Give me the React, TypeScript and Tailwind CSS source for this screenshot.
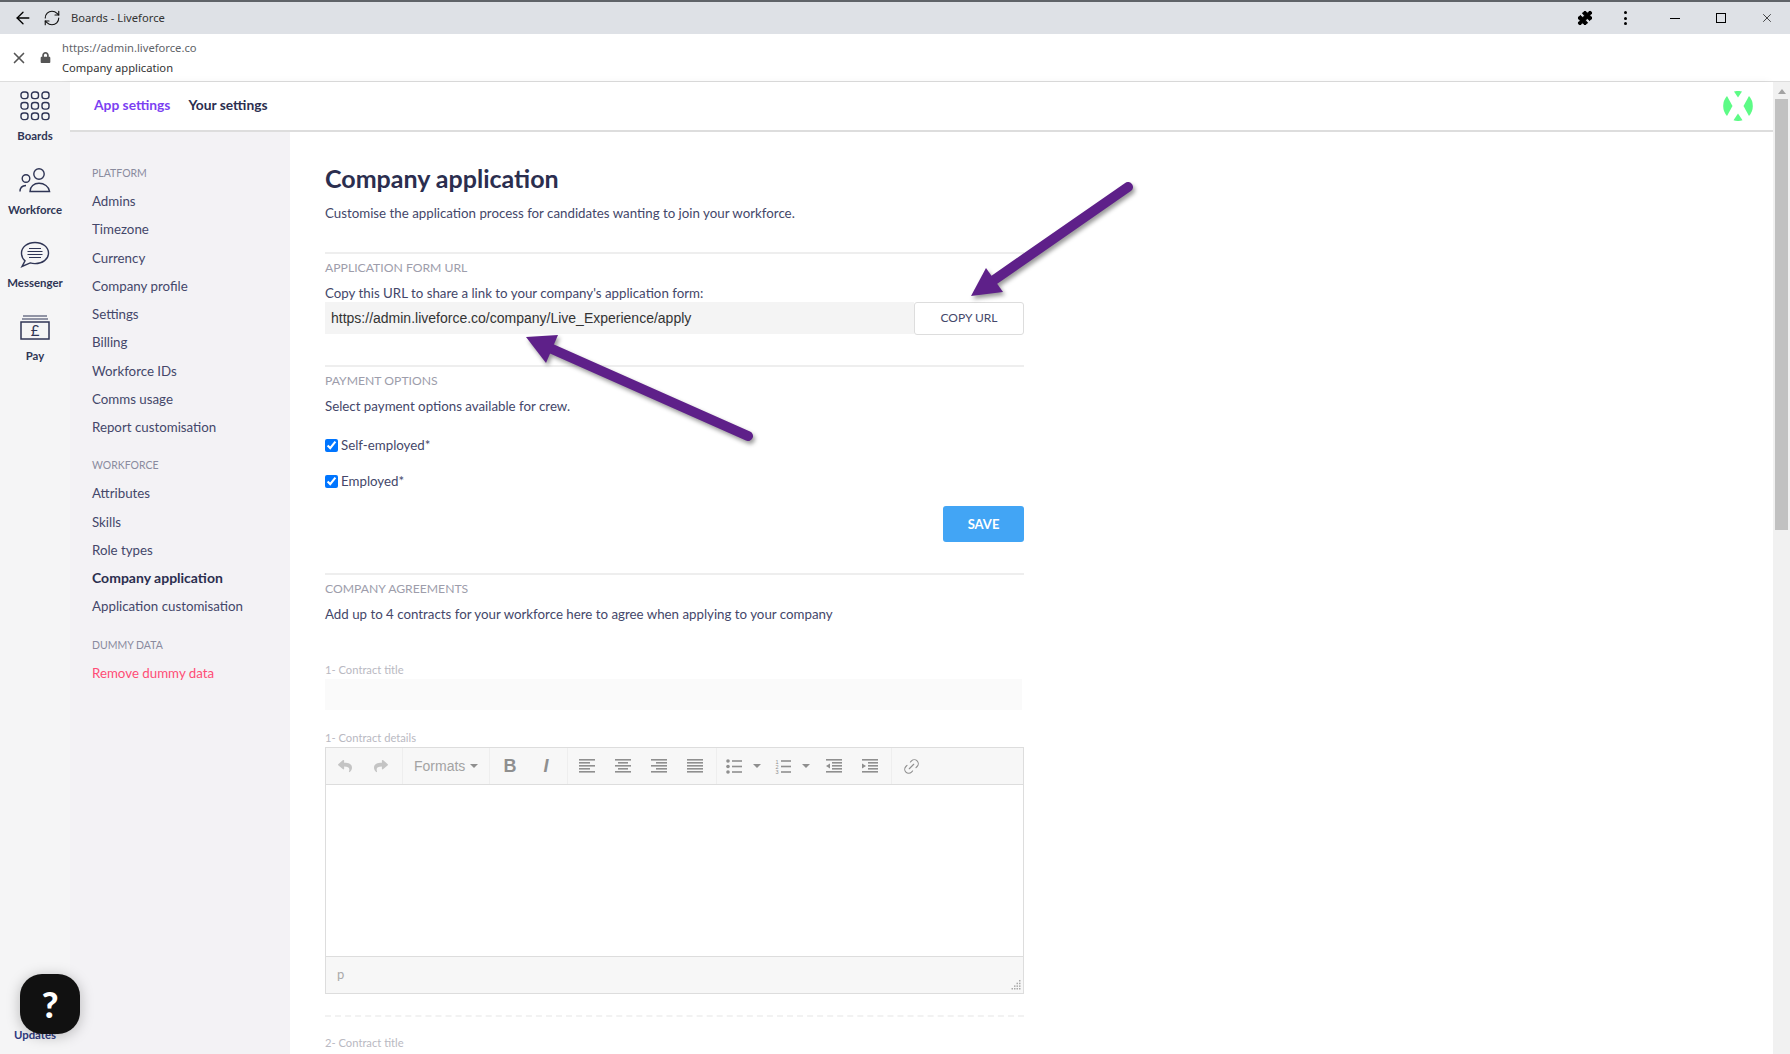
import { ArrowLeft, Link2, Puzzle, RefreshCw, X } from 'lucide-react';
import { FaLock, FaReply, FaShare } from 'react-icons/fa';

const platformLinks = [
  'Admins',
  'Timezone',
  'Currency',
  'Company profile',
  'Settings',
  'Billing',
  'Workforce IDs',
  'Comms usage',
  'Report customisation',
];
const workforceLinks = ['Attributes', 'Skills', 'Role types', 'Company application', 'Application customisation'];

function BoardsIcon() {
  const cells = [0, 10.5, 21];
  return (
    <svg width="30" height="30" viewBox="0 0 30 30" fill="none" stroke="#2f3555" strokeWidth="1.4">
      {cells.map((y) =>
        cells.map((x) => <rect key={`${x}-${y}`} x={x + 1} y={y + 1} width="7" height="6.6" rx="2.6" />)
      )}
    </svg>
  );
}

function WorkforceIcon() {
  return (
    <svg width="32" height="26" viewBox="0 0 32 26" fill="none" stroke="#2f3555" strokeWidth="1.4">
      <circle cx="20" cy="7" r="5.2" />
      <circle cx="7" cy="11.5" r="3.8" />
      <path d="M11 24.5c0-5 4-8.2 9-8.2s10 3.2 10.6 8.2z" />
      <path d="M1 24.5c0-3.6 2.4-5.8 6-6" />
    </svg>
  );
}

function MessengerIcon() {
  return (
    <svg width="30" height="27" viewBox="0 0 30 27" fill="none" stroke="#2f3555" strokeWidth="1.4">
      <path d="M15 1.5c7.6 0 13.5 4.6 13.5 10.6S22.6 22.6 15 22.6c-1.7 0-3.3-.2-4.8-.7L2 25.5l3-5.6C2.8 18 1.5 15.2 1.5 12.1 1.5 6.1 7.4 1.5 15 1.5z" />
      <path d="M9 7.5h12M7.5 10.5h15M7.5 13.5h15M9 16.5h12" strokeWidth="1.2" />
    </svg>
  );
}

function PayIcon() {
  return (
    <svg width="30" height="25" viewBox="0 0 30 25" fill="none" stroke="#2f3555">
      <path d="M3 1h24M2 4h26" strokeWidth="1.2" />
      <rect x="1" y="7" width="28" height="17" strokeWidth="1.5" />
      <text x="15" y="21" textAnchor="middle" fontSize="15" fontFamily="Lato, sans-serif" fill="#2f3555" stroke="none">
        £
      </text>
    </svg>
  );
}

function RailItem({
  label,
  icon,
  className,
  labelClass,
}: {
  label: string;
  icon: React.ReactNode;
  className: string;
  labelClass: string;
}) {
  return (
    <div className={`flex flex-col items-center pt-[9px] ${className}`}>
      <div className="flex h-[30px] items-center justify-center">{icon}</div>
      <span className={`text-[11.4px] leading-4 font-bold text-[#2f3555] ${labelClass}`}>{label}</span>
    </div>
  );
}

function SectionTitle({ children }: { children: React.ReactNode }) {
  return <p className="text-[12.2px] leading-[18px] uppercase text-[#9d9dab]">{children}</p>;
}

function NavGroup({ title, links, active }: { title: string; links: string[]; active?: string }) {
  return (
    <div className="mb-[15px]">
      <p className="mb-[5px] h-[18px] text-[10.5px] leading-[18px] uppercase text-[#8a8b9e]">{title}</p>
      {links.map((link) => (
        <p
          key={link}
          className={
            link === active
              ? 'h-[28.25px] text-[14px] leading-[28px] font-bold text-[#2b2e4f]'
              : 'h-[28.25px] text-[13.3px] leading-[28px] text-[#44476a]'
          }
        >
          {link}
        </p>
      ))}
    </div>
  );
}

// tinymce style line icons, one row of bars per entry
function BarsIcon({ rows }: { rows: [number, number][] }) {
  return (
    <svg width="16" height="15" viewBox="0 0 16 15" fill="#8f8f8f">
      {rows.map(([x, w], i) => (
        <rect key={i} x={x} y={i * 3} width={w} height="1.6" />
      ))}
    </svg>
  );
}

function ToolButton({ children }: { children: React.ReactNode }) {
  return <div className="flex h-full w-[36px] items-center justify-center text-[#9b9b9b]">{children}</div>;
}

function Caret() {
  return <span className="h-0 w-0 border-x-[4px] border-t-[4px] border-x-transparent border-t-[#8f8f8f]" />;
}

function Toolbar() {
  return (
    <div className="flex h-[37px] border-b border-[#ddd] bg-[#f7f7f7]">
      <div className="flex w-[77px] border-r border-[#eee] pl-[1px]">
        <ToolButton>
          <FaReply size={14} className="text-[#c4c4c4]" />
        </ToolButton>
        <ToolButton>
          <FaShare size={14} className="text-[#c4c4c4]" />
        </ToolButton>
      </div>
      <div className="flex w-[87px] items-center gap-[5px] border-r border-[#eee] pl-[11px]">
        <span className="font-['Liberation_Sans',sans-serif] text-[14px] text-[#a3a3a3]">Formats</span>
        <Caret />
      </div>
      <div className="flex w-[78px] border-r border-[#eee] pl-[2px] font-['Liberation_Sans',sans-serif]">
        <ToolButton>
          <span className="text-[18px] font-bold text-[#8f8f8f]">B</span>
        </ToolButton>
        <ToolButton>
          <span className="text-[18px] font-bold italic text-[#8f8f8f]">I</span>
        </ToolButton>
      </div>
      <div className="flex w-[149px] border-r border-[#eee] pl-[1px]">
        <ToolButton>
          <BarsIcon rows={[[0, 16], [0, 11], [0, 16], [0, 11], [0, 16]]} />
        </ToolButton>
        <ToolButton>
          <BarsIcon rows={[[0, 16], [3, 10], [0, 16], [3, 10], [0, 16]]} />
        </ToolButton>
        <ToolButton>
          <BarsIcon rows={[[0, 16], [5, 11], [0, 16], [5, 11], [0, 16]]} />
        </ToolButton>
        <ToolButton>
          <BarsIcon rows={[[0, 16], [0, 16], [0, 16], [0, 16], [0, 16]]} />
        </ToolButton>
      </div>
      <div className="flex w-[175px] items-center border-r border-[#eee] pl-[9px]">
        <svg width="16" height="15" viewBox="0 0 16 15" fill="#8f8f8f">
          <circle cx="2" cy="2" r="1.8" />
          <circle cx="2" cy="7.5" r="1.8" />
          <circle cx="2" cy="13" r="1.8" />
          <rect x="6" y="1.2" width="10" height="1.6" />
          <rect x="6" y="6.7" width="10" height="1.6" />
          <rect x="6" y="12.2" width="10" height="1.6" />
        </svg>
        <div className="ml-[11px] flex">
          <Caret />
        </div>
        <svg className="ml-[14px]" width="16" height="15" viewBox="0 0 16 15" fill="#8f8f8f">
          <text x="0.5" y="4.5" fontSize="5.5" fontFamily="Liberation Sans, sans-serif">1</text>
          <text x="0.5" y="10" fontSize="5.5" fontFamily="Liberation Sans, sans-serif">2</text>
          <text x="0.5" y="15" fontSize="5.5" fontFamily="Liberation Sans, sans-serif">3</text>
          <rect x="6" y="1.2" width="10" height="1.6" />
          <rect x="6" y="6.7" width="10" height="1.6" />
          <rect x="6" y="12.2" width="10" height="1.6" />
        </svg>
        <div className="ml-[11px] flex">
          <Caret />
        </div>
        <div className="ml-[6px] flex h-full">
          <ToolButton>
            <svg width="16" height="15" viewBox="0 0 16 15" fill="#8f8f8f">
              <rect y="0" width="16" height="1.6" />
              <rect x="6" y="3" width="10" height="1.6" />
              <rect x="6" y="6" width="10" height="1.6" />
              <rect x="6" y="9" width="10" height="1.6" />
              <rect y="12" width="16" height="1.6" />
              <path d="M4 4.5v5L0 7z" />
            </svg>
          </ToolButton>
          <ToolButton>
            <svg width="16" height="15" viewBox="0 0 16 15" fill="#8f8f8f">
              <rect y="0" width="16" height="1.6" />
              <rect x="6" y="3" width="10" height="1.6" />
              <rect x="6" y="6" width="10" height="1.6" />
              <rect x="6" y="9" width="10" height="1.6" />
              <rect y="12" width="16" height="1.6" />
              <path d="M0 4.5v5L4 7z" />
            </svg>
          </ToolButton>
        </div>
      </div>
      <div className="flex pl-[1px]">
        <ToolButton>
          <Link2 size={19} strokeWidth={1.4} className="-rotate-45 text-[#8f8f8f]" />
        </ToolButton>
      </div>
    </div>
  );
}

function Arrows() {
  return (
    <>
      <svg
        className="absolute top-[48px] left-[670px] drop-shadow-[2px_3px_2px_rgba(0,0,0,0.4)]"
        width="180"
        height="125"
        viewBox="0 0 180 125"
      >
        <line x1="168" y1="7" x2="34" y2="100" stroke="#5e2089" strokeWidth="10" strokeLinecap="round" />
        <path d="M11 116L26 88L43 112Z" fill="#5e2089" />
      </svg>
      <svg
        className="absolute top-[198px] left-[230px] drop-shadow-[2px_3px_2px_rgba(0,0,0,0.4)]"
        width="240"
        height="115"
        viewBox="0 0 240 115"
      >
        <line x1="228" y1="106" x2="32" y2="19" stroke="#5e2089" strokeWidth="10" strokeLinecap="round" />
        <path d="M6 7L38 5L26 33Z" fill="#5e2089" />
      </svg>
    </>
  );
}

export default function App() {
  return (
    <div className="flex h-[1054px] w-[1790px] flex-col overflow-hidden bg-white font-['Lato',sans-serif] text-[13.3px] text-[#44476a]">
      {/* browser title bar */}
      <div className="flex h-[34px] shrink-0 items-center border-t-2 border-[#5f6368] bg-[#dee1e6] font-['Noto_Sans',sans-serif] text-[#333]">
        <ArrowLeft size={20} strokeWidth={1.6} className="ml-[13px] text-black" />
        <RefreshCw size={18} strokeWidth={1.5} className="ml-[10px] text-[#111]" />
        <span className="ml-[10px] text-[11.2px]">Boards - Liveforce</span>
        <div className="ml-auto flex items-center text-black">
          <Puzzle size={16} fill="black" strokeWidth={1.5} />
          <span className="ml-[31px] flex flex-col gap-[2.5px]">
            <i className="h-[3px] w-[3px] rounded-full bg-black" />
            <i className="h-[3px] w-[3px] rounded-full bg-black" />
            <i className="h-[3px] w-[3px] rounded-full bg-black" />
          </span>
          <span className="ml-[43px] h-[1px] w-[10px] bg-black" />
          <span className="ml-[36px] h-[10px] w-[10px] border border-black" />
          <X size={14} strokeWidth={1.2} className="mr-[16px] ml-[34px]" />
        </div>
      </div>

      {/* address bar */}
      <div className="flex h-[48px] shrink-0 items-center border-b border-[#ddd] bg-white font-['Noto_Sans',sans-serif]">
        <X size={18} strokeWidth={2.2} className="ml-[10px] text-[#555]" />
        <FaLock size={11} className="ml-[12px] text-[#555]" />
        <div className="ml-[11px] flex flex-col gap-[4px] text-[11.2px] leading-4">
          <span className="text-[#5f6368]">https://admin.liveforce.co</span>
          <span className="text-[#333]">Company application</span>
        </div>
      </div>

      <div className="flex min-h-0 flex-1">
        {/* app rail */}
        <div className="relative flex w-[70px] shrink-0 flex-col bg-[#f5f5f6]">
          <RailItem label="Boards" icon={<BoardsIcon />} className="h-[74px]" labelClass="mt-[7px]" />
          <RailItem label="Workforce" icon={<WorkforceIcon />} className="h-[74px]" labelClass="mt-[7px]" />
          <RailItem label="Messenger" icon={<MessengerIcon />} className="h-[73px]" labelClass="mt-[6px]" />
          <RailItem label="Pay" icon={<PayIcon />} className="h-[74px]" labelClass="mt-[6px]" />
          <span className="mt-auto mb-[11px] text-center text-[11.4px] leading-4 font-bold text-[#2f3a80]">Updates</span>
          <div className="absolute top-[892px] left-[20px] z-20 flex h-[60px] w-[60px] items-center justify-center rounded-[22px] bg-[#111] text-[36px] font-black text-white shadow-[0_2px_14px_rgba(0,0,0,0.25)]">
            ?
          </div>
        </div>

        <div className="flex min-w-0 flex-1 flex-col shadow-[-4px_0_8px_rgba(0,0,0,0.05)]">
          {/* top nav */}
          <div className="flex h-[50px] shrink-0 items-center border-b-2 border-[#ddd] bg-white pr-[20px] pl-[24px] text-[13.8px] font-bold">
            <span className="mb-[1px] text-[#7b3ff2]">App settings</span>
            <span className="mb-[1px] ml-[18px] text-[#2b2e4f]">Your settings</span>
            <svg className="ml-auto" width="30" height="30" viewBox="0 0 30 30" fill="#5dfb86">
              <path d="M11 .5A15 15 0 0 1 19 .5L15 6.5Z" />
              <path d="M4 5L9.5 15L4 25A15 15 0 0 1 4 5Z" />
              <path d="M26 5L20.5 15L26 25A15 15 0 0 0 26 5Z" />
              <path d="M15 22.5L19.5 29.3A15 15 0 0 1 10.5 29.3Z" />
            </svg>
          </div>

          <div className="flex min-h-0 flex-1">
            {/* settings nav */}
            <div className="w-[220px] shrink-0 bg-[#f3f2f5] pt-[32px] pl-[22px]">
              <NavGroup title="Platform" links={platformLinks} />
              <NavGroup title="Workforce" links={workforceLinks} active="Company application" />
              <div>
                <p className="mb-[5px] h-[18px] text-[10.5px] leading-[18px] uppercase text-[#8a8b9e]">Dummy data</p>
                <p className="h-[28.25px] text-[13.3px] leading-[28px] text-[#ff4d76]">Remove dummy data</p>
              </div>
            </div>

            {/* page content */}
            <div className="relative min-w-0 flex-1 overflow-hidden pl-[35px]">
              <div className="w-[699px]">
                <h1 className="mt-[29px] text-[25px] leading-[34px] font-bold text-[#2b2e4f]">Company application</h1>
                <p className="mt-[8px] leading-5">
                  Customise the application process for candidates wanting to join your workforce.
                </p>

                <div className="mt-[29px] h-[2px] bg-[#eee]" />
                <div className="mt-[5px]">
                  <SectionTitle>Application form URL</SectionTitle>
                </div>
                <p className="mt-[7px] leading-[18px]">Copy this URL to share a link to your company's application form:</p>
                <div className="flex h-[32px]">
                  <input
                    readOnly
                    value="https://admin.liveforce.co/company/Live_Experience/apply"
                    className="min-w-0 flex-1 bg-[#f4f4f4] pl-[6px] font-['Liberation_Sans',sans-serif] text-[14px] text-[#333] outline-none"
                  />
                  <button className="h-[33px] w-[110px] rounded-[3px] border border-[#ddd] bg-white pb-[1px] text-[12px] text-[#44476a]">
                    COPY URL
                  </button>
                </div>

                <div className="mt-[31px] h-[2px] bg-[#eee]" />
                <div className="mt-[5px]">
                  <SectionTitle>Payment options</SectionTitle>
                </div>
                <p className="mt-[6px] leading-5">Select payment options available for crew.</p>
                <label className="mt-[20px] flex h-5 items-center gap-[3px]">
                  <input type="checkbox" defaultChecked className="m-0 mb-[2px] h-[13px] w-[13px] accent-[#0075ff]" />
                  Self-employed*
                </label>
                <label className="mt-[16px] flex h-5 items-center gap-[3px]">
                  <input type="checkbox" defaultChecked className="m-0 mb-[2px] h-[13px] w-[13px] accent-[#0075ff]" />
                  Employed*
                </label>
                <div className="mt-[14px] flex justify-end">
                  <button className="h-[36px] w-[81px] rounded-[3px] bg-[#42a5f5] pt-[1px] text-[13px] font-bold text-white">
                    SAVE
                  </button>
                </div>

                <div className="mt-[31px] h-[2px] bg-[#eee]" />
                <div className="mt-[5px]">
                  <SectionTitle>Company agreements</SectionTitle>
                </div>
                <p className="mt-[6px] leading-5">
                  Add up to 4 contracts for your workforce here to agree when applying to your company
                </p>

                <p className="mt-[38px] text-[11.2px] leading-4 text-[#b9b9c2]">1- Contract title</p>
                <div className="mt-[1px] h-[31px] w-[697px] bg-[#fafafa]" />
                <p className="mt-[20px] text-[11.2px] leading-4 text-[#b9b9c2]">1- Contract details</p>

                <div className="mt-[1px] flex h-[247px] flex-col border border-[#ddd]">
                  <Toolbar />
                  <div className="flex-1 bg-white" />
                  <div className="relative flex h-[37px] items-center border-t border-[#ddd] bg-[#f7f7f7] pl-[11px] text-[13px] text-[#aaa]">
                    p
                    <svg className="absolute right-[2px] bottom-[3px]" width="10" height="10" viewBox="0 0 10 10" fill="#aaa">
                      <rect x="8" y="0" width="1.5" height="1.5" />
                      <rect x="5.5" y="2.7" width="1.5" height="1.5" />
                      <rect x="8" y="2.7" width="1.5" height="1.5" />
                      <rect x="3" y="5.4" width="1.5" height="1.5" />
                      <rect x="5.5" y="5.4" width="1.5" height="1.5" />
                      <rect x="8" y="5.4" width="1.5" height="1.5" />
                      <rect x="0.5" y="8" width="1.5" height="1.5" />
                      <rect x="3" y="8" width="1.5" height="1.5" />
                      <rect x="5.5" y="8" width="1.5" height="1.5" />
                      <rect x="8" y="8" width="1.5" height="1.5" />
                    </svg>
                  </div>
                </div>

                <div className="mt-[21px] border-t-2 border-dashed border-[#f2f2f2]" />
                <p className="mt-[18px] text-[11.2px] leading-4 text-[#b9b9c2]">2- Contract title</p>
              </div>
              <Arrows />
            </div>
          </div>
        </div>

        {/* page scrollbar */}
        <div className="flex w-[17px] shrink-0 flex-col items-center bg-[#f1f1f1]">
          <span className="mt-[7px] h-0 w-0 border-x-[4px] border-b-[5px] border-x-transparent border-b-[#a3a3a3]" />
          <span className="mt-[5px] h-[431px] w-[13px] bg-[#c1c1c1]" />
        </div>
      </div>
    </div>
  );
}
